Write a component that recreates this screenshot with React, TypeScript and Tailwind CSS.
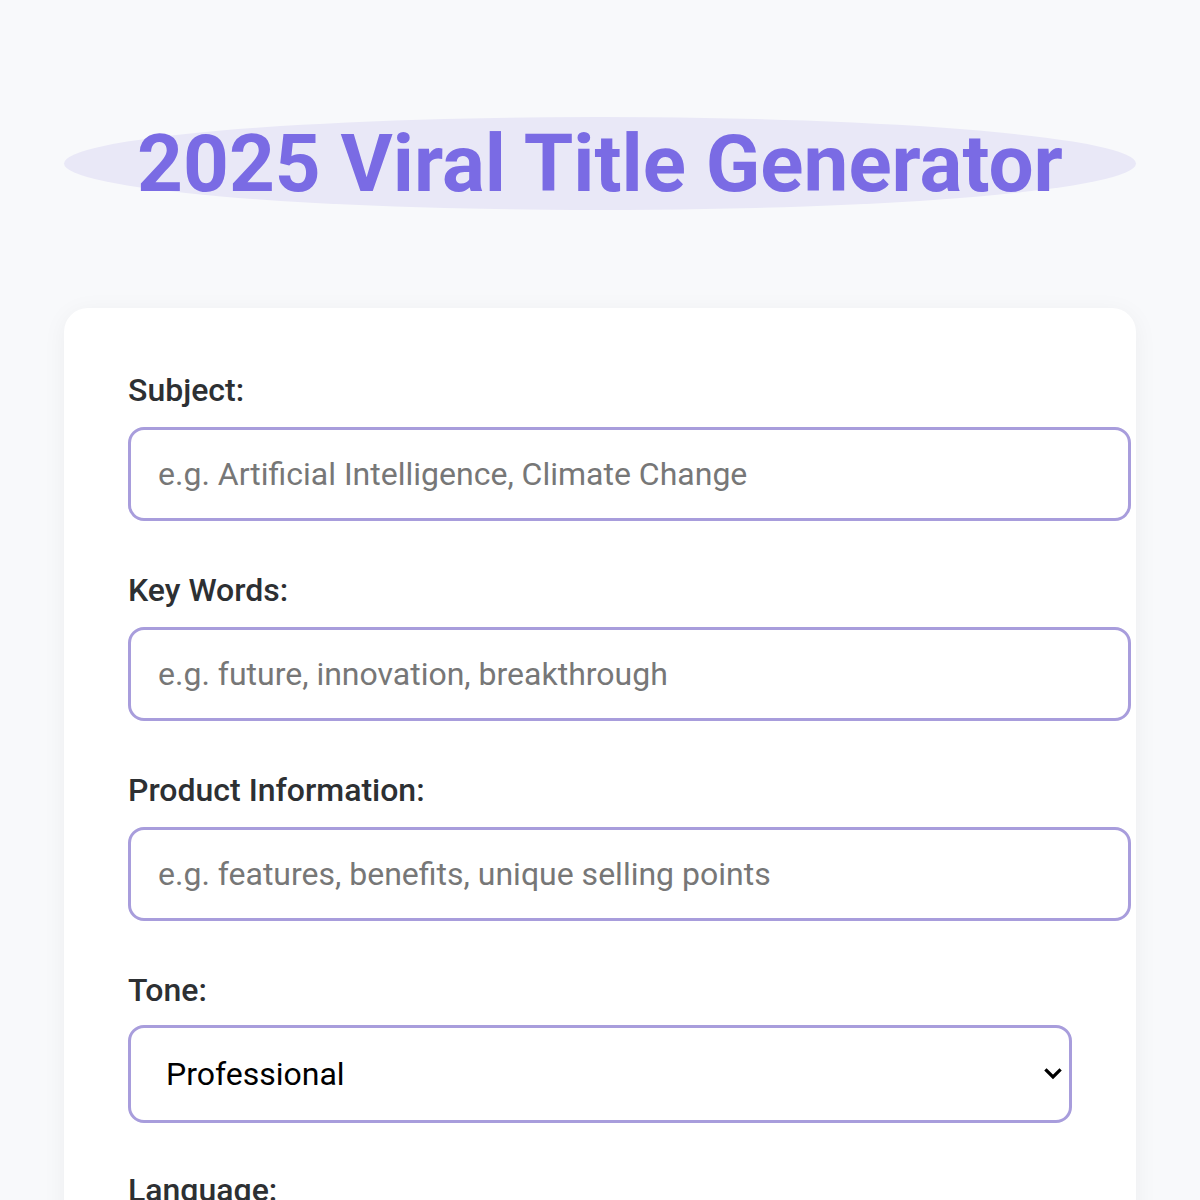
import React from 'react';

const fields = [
  { label: 'Subject:', placeholder: 'e.g. Artificial Intelligence, Climate Change' },
  { label: 'Key Words:', placeholder: 'e.g. future, innovation, breakthrough' },
  { label: 'Product Information:', placeholder: 'e.g. features, benefits, unique selling points' },
];

function Chevron() {
  return (
    <svg
      className="pointer-events-none absolute right-[10px] top-1/2 h-[12px] w-[18px] -translate-y-1/2"
      viewBox="0 0 18 12"
      fill="none"
      stroke="black"
      strokeWidth={3.2}
      strokeLinecap="square"
    >
      <path d="M2.5 2.5 L9 9 L15.5 2.5" />
    </svg>
  );
}

function SelectField({ label, value, options }: { label: string; value: string; options: string[] }) {
  return (
    <div className="mb-[49px]">
      <label className="mb-[16px] block text-[32px] font-medium leading-[37px] text-[#2d3033]">{label}</label>
      <div className="relative w-full">
        <select
          defaultValue={value}
          className="h-[98px] w-full appearance-none rounded-2xl border-[3px] border-[#a89ddc] bg-white pl-[35px] pr-12 text-[32px] text-black outline-none"
        >
          {options.map((o) => (
            <option key={o}>{o}</option>
          ))}
        </select>
        <Chevron />
      </div>
    </div>
  );
}

export default function App() {
  return (
    <div className="min-h-screen bg-[#f8f9fb] px-16 pt-[117px] pb-16 font-['Roboto',sans-serif]">
      {/* Title */}
      <div className="flex h-[93px] items-center justify-center rounded-[50%] bg-[#e9e8f7]">
        <h1 className="text-[80px] font-bold leading-none text-[#7a6be4]">2025 Viral Title Generator</h1>
      </div>

      {/* Form card */}
      <div className="mt-[98px] rounded-3xl bg-white p-16 shadow-[0_4px_24px_rgba(0,0,0,0.05)]">
        {fields.map((f) => (
          <div key={f.label} className="mb-[51px]">
            <label className="mb-[18px] block text-[32px] font-medium leading-[37px] text-[#2d3033]">
              {f.label}
            </label>
            <input
              type="text"
              placeholder={f.placeholder}
              className="h-[94px] w-[1003px] rounded-2xl border-[3px] border-[#a89ddc] bg-white px-[27px] text-[32px] text-[#222] outline-none placeholder:text-[#777]"
            />
          </div>
        ))}

        <SelectField
          label="Tone:"
          value="Professional"
          options={['Professional', 'Casual', 'Humorous', 'Inspirational']}
        />
        <SelectField label="Language:" value="English" options={['English', 'Spanish', 'French']} />
      </div>
    </div>
  );
}
